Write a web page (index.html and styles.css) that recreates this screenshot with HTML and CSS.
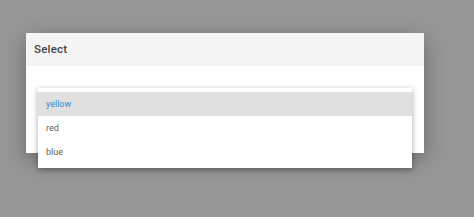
FILE: index.html
```html
<!DOCTYPE html>
<html lang="en">
<head>
    <meta charset="UTF-8">
    <title>Select</title>
    <link rel="stylesheet" href="styles.css">
</head>
<body>

<div class="overlay">
    <div class="dialog">
        <div class="dialog-head">Select</div>
        <div class="dialog-body"></div>

        <!-- opened menu of the select, sits over the dialog -->
        <ul class="menu">
            <li class="option active">yellow</li>
            <li class="option">red</li>
            <li class="option">blue</li>
        </ul>
    </div>
</div>

</body>
</html>
```

FILE: styles.css
```css
*{
    margin: 0;
    padding: 0;
    box-sizing: border-box;
}

body{
    background-color: #969696;
    font-family: Roboto, "Liberation Sans", sans-serif;
}

.overlay{
    height: 217px;
    padding: 33px 0 0 26px;
}

.dialog{
    position: relative;
    width: 398px;
    height: 120px;
    background-color: #fff;
    box-shadow: 0 6px 18px rgba(0, 0, 0, 0.3);
}

.dialog-head{
    height: 33px;
    padding: 0 8px 1px;
    display: flex;
    align-items: center;
    background-color: #f4f4f4;
    font-size: 11.5px;
    font-weight: 500;
    letter-spacing: 0.2px;
    color: #444;
}

.menu{
    position: absolute;
    left: 12px;
    top: 55px;
    width: 374px;
    padding: 4px 0;
    list-style: none;
    background-color: #fff;
    box-shadow: 0 2px 6px rgba(0, 0, 0, 0.35);
}

.option{
    height: 24px;
    padding: 0 8px 1px;
    display: flex;
    align-items: center;
    font-size: 9px;
    color: #5e5e5e;
}

.active{
    background-color: #e0e0e0;
    color: #3b8ad6;
}
```
